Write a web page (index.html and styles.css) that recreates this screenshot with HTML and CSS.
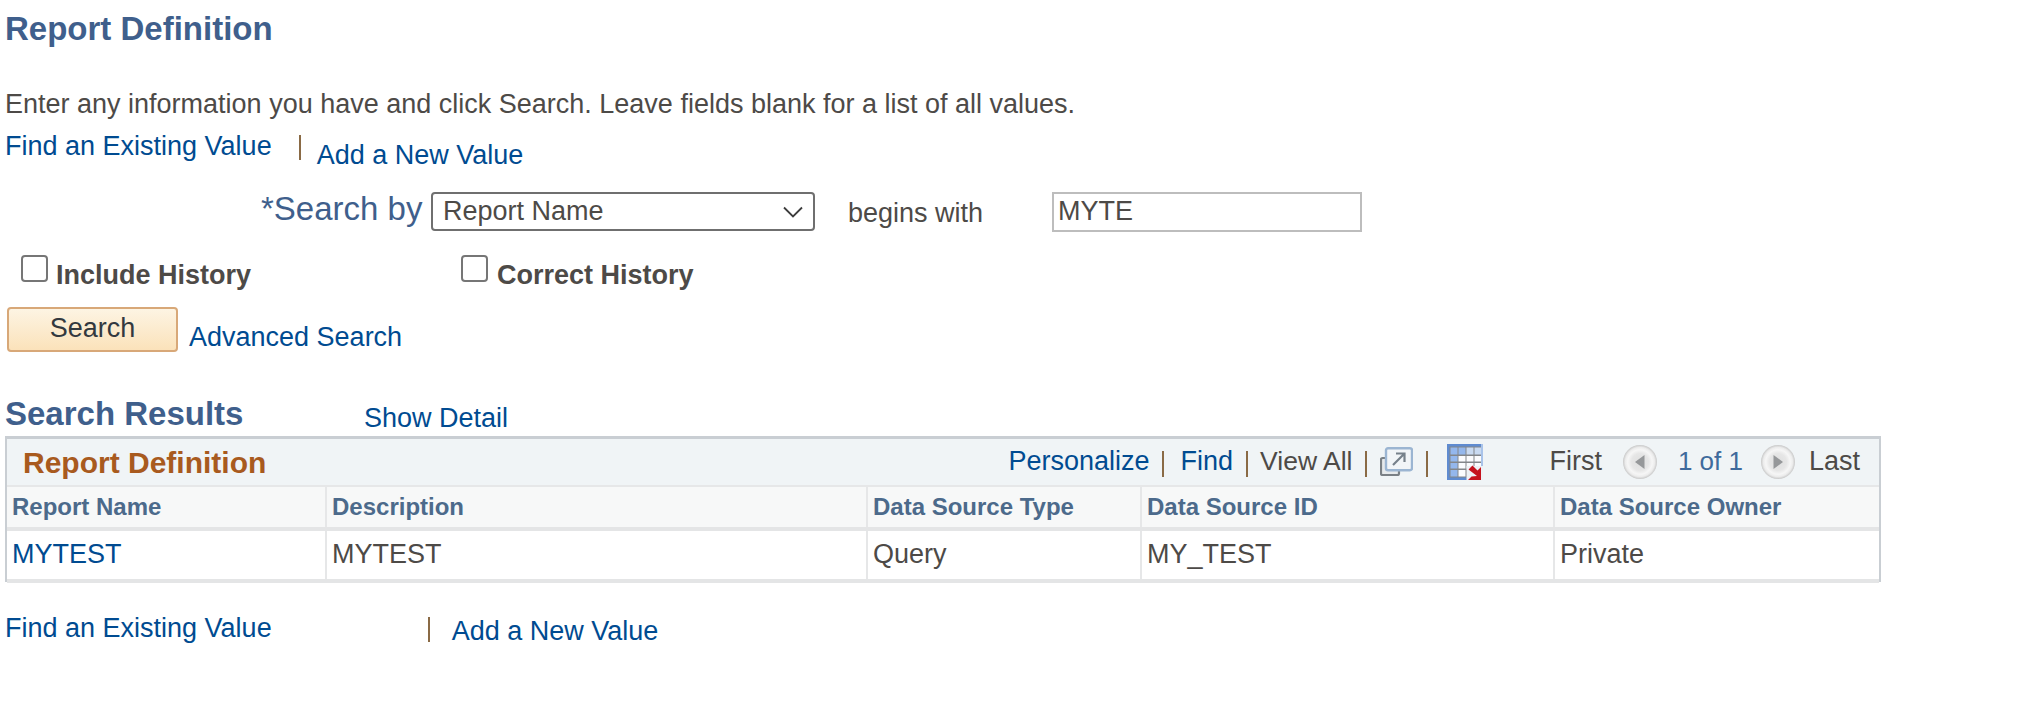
FILE: index.html
```html
<!DOCTYPE html>
<html lang="en">
<head>
<meta charset="utf-8">
<title>Report Definition</title>
<link rel="stylesheet" href="styles.css">
</head>
<body>
<h1 class="page-title">Report Definition</h1>
<p class="intro">Enter any information you have and click Search. Leave fields blank for a list of all values.</p>

<nav class="tabs">
  <a class="link tab-find" href="#">Find an Existing Value</a>
  <span class="sep tab-sep"></span>
  <a class="link tab-add" href="#">Add a New Value</a>
</nav>

<form class="search-row">
  <label class="search-label" for="by">*Search by</label>
  <span class="select-wrap">
    <select id="by" class="select"><option>Report Name</option></select>
    <svg class="chevron" viewBox="0 0 20 12" width="20" height="12"><path d="M1 1.500 10 10.500 19 1.500" fill="none" stroke="#3c3c3c" stroke-width="1.800"/></svg>
  </span>
  <span class="begins">begins with</span>
  <input class="text-input" type="text" value="MYTE">
</form>

<div class="check-row">
  <label class="check check-first"><input type="checkbox" class="box"><span>Include History</span></label>
  <label class="check check-second"><input type="checkbox" class="box"><span>Correct History</span></label>
</div>

<div class="action-row">
  <button type="button" class="btn">Search</button>
  <a class="link adv" href="#">Advanced Search</a>
</div>

<div class="results-row">
  <h2 class="results-title">Search Results</h2>
  <a class="link detail" href="#">Show Detail</a>
</div>

<section class="grid">
  <header class="grid-bar">
    <h3 class="grid-title">Report Definition</h3>
    <div class="grid-nav">
      <a class="link nav-personalize" href="#">Personalize</a>
      <span class="sep sep-1"></span>
      <a class="link nav-find" href="#">Find</a>
      <span class="sep sep-2"></span>
      <span class="nav-viewall">View All</span>
      <span class="sep sep-3"></span>
      <svg class="ico-zoom" viewBox="0 0 33 29" width="33" height="29">
        <rect x="1" y="11" width="18" height="17" rx="1.500" fill="#e6e9eb" stroke="#7a8085" stroke-width="2.200"/>
        <rect x="6" y="1.200" width="26" height="22" rx="2" fill="#f2f5f8" stroke="#9bb5d2" stroke-width="2.400"/>
        <path d="M13 18 24 7M16 6.500h8.500V15" fill="none" stroke="#77818b" stroke-width="2.200"/>
      </svg>
      <span class="sep sep-4"></span>
      <svg class="ico-sheet" viewBox="0 0 36 36" width="36" height="36">
        <rect width="36" height="36" fill="#83868a"/>
        <rect width="36" height="2.500" fill="#5f8bd0"/>
        <rect width="2.500" height="36" fill="#5f8bd0"/>
        <rect x="34" width="2" height="22" fill="#a9c3ea"/>
        <rect y="33.500" width="24" height="2.500" fill="#5f8bd0"/>
        <path d="M3.500 3.500h7v7h-7zM11.500 3.500h7v7h-7zM3.500 12h7v5.500h-7zM3.500 19h7v5.500h-7zM3.500 26h7v6.500h-7z" fill="#94b7ec"/>
        <path d="M19.500 3.500h7v7h-7zM27.500 3.500h6.500v7h-6.500z" fill="#c9daf1"/>
        <path d="M11.500 12h7v5.500h-7zM19.500 12h7v5.500h-7zM27.500 12h6.500v5.500h-6.500zM11.500 19h7v5.500h-7zM19.500 19h7v5.500h-7zM27.500 19h6.500v3h-6.500zM11.500 26h7v6.500h-7z" fill="#fbfcfe"/>
        <path d="M19.500 22H36V36H19.500Z" fill="#eef1f5"/>
        <path d="M21.500 25.500 25.500 21.500 30.500 26.500 34 23V36H21L24.500 32.500 30 32Z" fill="#c5121d"/>
      </svg>
      <span class="nav-first">First</span>
      <span class="circle circle-prev"><svg viewBox="0 0 10 14" width="10" height="14"><path d="M9.500 0V14L0 7Z" fill="#96989a"/></svg></span>
      <span class="nav-count">1 of 1</span>
      <span class="circle circle-next"><svg viewBox="0 0 10 14" width="10" height="14"><path d="M.5 0V14L10 7Z" fill="#96989a"/></svg></span>
      <span class="nav-last">Last</span>
    </div>
  </header>
  <table class="table">
    <colgroup>
      <col class="c1"><col class="c2"><col class="c3"><col class="c4"><col class="c5">
    </colgroup>
    <thead>
      <tr><th>Report Name</th><th>Description</th><th>Data Source Type</th><th>Data Source ID</th><th>Data Source Owner</th></tr>
    </thead>
    <tbody>
      <tr><td><a class="link" href="#">MYTEST</a></td><td>MYTEST</td><td>Query</td><td>MY_TEST</td><td>Private</td></tr>
    </tbody>
  </table>
</section>

<nav class="foot">
  <a class="link foot-find" href="#">Find an Existing Value</a>
  <span class="sep foot-sep"></span>
  <a class="link foot-add" href="#">Add a New Value</a>
</nav>
</body>
</html>
```

FILE: styles.css
```css
* { box-sizing: border-box; }
html, body { margin: 0; padding: 0; background: #fff; }
body {
  width: 2028px;
  height: 712px;
  overflow: hidden;
  font-family: "Liberation Sans", Arial, sans-serif;
  font-size: 27px;
  line-height: 30px;
  color: #4d4a47;
}
.link { color: #004b91; text-decoration: none; white-space: nowrap; }
.sep { display: block; width: 2px; background: #8a6a45; }

.page-title {
  margin: 0;
  height: 60px;
  padding-left: 5px;
  font-size: 33px;
  line-height: 58px;
  font-weight: 700;
  color: #3f5f8c;
}
.intro { margin: 29px 0 0; padding-left: 5px; height: 30px; white-space: nowrap; }

.tabs { display: flex; margin-top: 12px; height: 38px; padding-left: 5px; }
.tab-sep { height: 25px; margin: 4px 0 0 27px; }
.tab-add { margin: 9px 0 0 16px; }

.search-row { display: flex; margin-top: 23px; height: 40px; padding-left: 261px; }
.search-label { font-size: 33px; line-height: 34px; color: #3f5f8c; width: 170px; white-space: nowrap; }
.select-wrap { position: relative; display: block; width: 384px; height: 39px; }
.select {
  appearance: none;
  display: block;
  width: 100%;
  height: 100%;
  padding: 0 0 2px 10px;
  border: 2px solid #6f6f6f;
  border-radius: 4px;
  background: #fff;
  font: inherit;
  color: #4d4a47;
}
.chevron { position: absolute; right: 12px; top: 14px; }
.begins { margin: 6px 0 0 33px; width: 204px; white-space: nowrap; }
.text-input {
  width: 310px;
  height: 40px;
  padding: 0 4px 2px;
  border: 2px solid #bdbdbd;
  border-radius: 0;
  outline: 0;
  font: inherit;
  color: #4d4a47;
}

.check-row { display: flex; margin-top: 23px; height: 35px; padding-left: 21px; }
.check { display: flex; font-weight: 700; white-space: nowrap; }
.check-first { width: 440px; }
.box {
  appearance: none;
  margin: 0 8px 0 0;
  width: 27px;
  height: 27px;
  border: 2.500px solid #767676;
  border-radius: 4px;
  background: #fff;
}
.check-second .box { margin-right: 9px; }
.check span { margin-top: 5px; }

.action-row { display: flex; margin-top: 17px; height: 45px; padding-left: 7px; }
.btn {
  width: 171px;
  height: 45px;
  padding: 0 0 4px;
  border: 2px solid #d8a878;
  border-radius: 4px;
  background: linear-gradient(#fdf4e3, #fbe2ba);
  font: inherit;
  color: #33393f;
}
.adv { margin: 15px 0 0 11px; }

.results-row { display: flex; margin-top: 46px; height: 38px; padding-left: 5px; }
.results-title { margin: 0; width: 359px; font-size: 33px; line-height: 32px; font-weight: 700; color: #3f5f8c; white-space: nowrap; }
.detail { margin-top: 5px; }

.grid {
  width: 1876px;
  height: 146px;
  margin-left: 5px;
  border: solid #c9ced3;
  border-width: 3px 2px;
}
.grid-bar {
  display: flex;
  justify-content: space-between;
  height: 48px;
  background: #f0f4f6;
  border-bottom: 2px solid #e6e7e8;
}
.grid-title { margin: 9px 0 0 16px; font-size: 30px; line-height: 30px; font-weight: 700; color: #a85a1e; white-space: nowrap; }
.grid-nav { display: flex; align-items: center; height: 44px; padding-right: 19px; white-space: nowrap; }
.sep-1, .sep-2, .sep-3, .sep-4 { height: 26px; margin-top: 6px; }
.sep-1 { margin-left: 12px; margin-right: 17px; }
.sep-2 { margin-left: 13px; margin-right: 12px; }
.sep-3 { margin-left: 13px; margin-right: 13px; }
.sep-4 { margin-left: 13px; margin-right: 19px; }
.nav-viewall { font-size: 26.500px; }
.ico-zoom, .ico-sheet { display: block; filter: blur(.45px); }
.ico-sheet { margin-top: 2px; }
.nav-first { margin-left: 66px; }
.circle {
  display: flex;
  align-items: center;
  justify-content: center;
  width: 34px;
  height: 34px;
  margin-top: 2px;
  border-radius: 50%;
  background: radial-gradient(circle closest-side, #dfdfdf 0, #e6e6e6 50%, #f6f6f6 72%, #ececec 86%, #c8c8c8 100%);
}
.circle svg { filter: blur(.5px); }
.circle-prev { margin-left: 21px; }
.nav-count { margin-left: 21px; font-size: 26px; color: #3f6a9c; }
.circle-next { margin-left: 18px; }
.nav-last { margin-left: 14px; }

.table {
  width: 100%;
  border-collapse: collapse;
  table-layout: fixed;
}
.c1 { width: 319px; }
.c2 { width: 541px; }
.c3 { width: 274px; }
.c4 { width: 413px; }
.table th, .table td {
  padding: 0 0 0 5px;
  text-align: left;
  border-left: 2px solid #e6e7e8;
  white-space: nowrap;
}
.table th:first-child, .table td:first-child { border-left: 0; padding-left: 5px; }
.table th {
  height: 42px;
  background: #f7f8f8;
  border-bottom: 4px solid #e4e5e6;
  font-size: 24px;
  line-height: 38px;
  font-weight: 700;
  color: #4c6a8b;
}
.table td { height: 52px; padding-bottom: 3px; border-bottom: 4px solid #e4e5e6; background: #fff; }

.foot { display: flex; margin-top: 31px; padding-left: 5px; }
.foot-sep { height: 25px; margin: 4px 0 0 156px; }
.foot-add { margin: 3px 0 0 22px; }
```
